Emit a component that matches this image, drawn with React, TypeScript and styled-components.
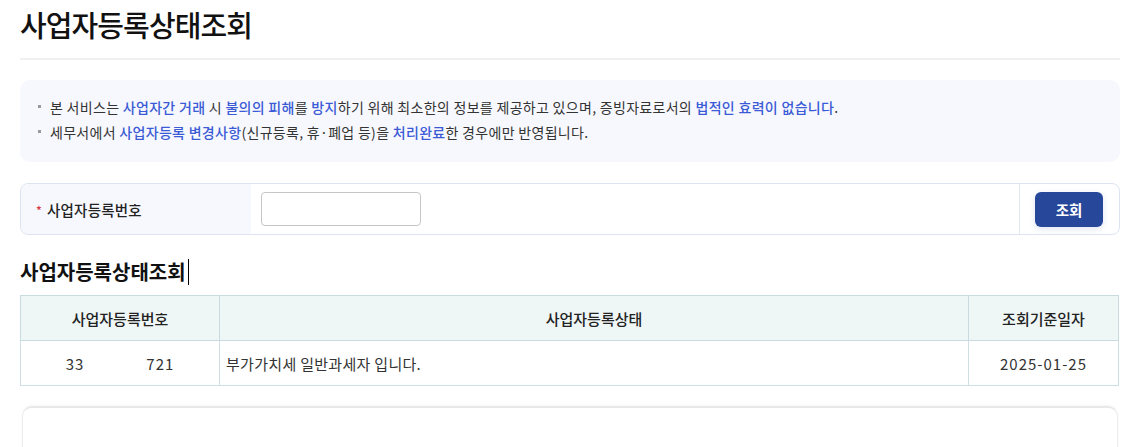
import React from "react";
import styled, { createGlobalStyle } from "styled-components";

const Global = createGlobalStyle`
  html, body { margin: 0; padding: 0; background: #fff; }
  body { font-family: "Noto Sans CJK KR", "Noto Sans", sans-serif; color: #222; }
  * { box-sizing: border-box; }
`;

const Page = styled.div`
  width: 1100px;
  margin-left: 20px;
  display: flex;
  flex-direction: column;
`;

const Title = styled.h1`
  margin: 0;
  height: 48px;
  line-height: 48px;
  font-size: 29px;
  font-weight: 500;
  letter-spacing: -0.9px;
  color: #111;
`;

const Divider = styled.hr`
  margin: 10px 0 0;
  border: 0;
  height: 2px;
  background: #f0f0f0;
`;

const InfoBox = styled.div`
  margin-top: 20px;
  background: #f7f8fd;
  border-radius: 10px;
  padding: 14px 18px 18px;
  display: flex;
  flex-direction: column;
`;

const InfoLine = styled.p`
  margin: 0;
  display: flex;
  align-items: center;
  height: 25px;
  font-size: 14px;
  letter-spacing: 0.3px;
  color: #333;
  white-space: pre;
  &::before {
    content: "";
    width: 3px;
    height: 3px;
    background: #999;
    margin-right: 9px;
    flex: none;
  }
`;

const Em = styled.span`
  color: #3b5bd6;
  font-weight: 500;
`;

const SearchBox = styled.div`
  margin-top: 21px;
  height: 52px;
  border: 1px solid #dce4f2;
  border-radius: 8px;
  display: flex;
  overflow: hidden;
`;

const LabelCell = styled.div`
  width: 230px;
  background: #f6f8fe;
  display: flex;
  align-items: center;
  padding-left: 15px;
  font-size: 14.5px;
  font-weight: 500;
  letter-spacing: 0.2px;
  color: #222;
`;

const Required = styled.span`
  color: #d9363e;
  font-size: 12px;
  margin-right: 5px;
`;

const InputCell = styled.div`
  flex: 1;
  display: flex;
  align-items: center;
  padding-left: 10px;
`;

const Input = styled.input`
  width: 160px;
  height: 34px;
  border: 1px solid #c6c6c6;
  border-radius: 4px;
  outline: none;
  padding: 0 8px;
  font-family: inherit;
  font-size: 14px;
`;

const ButtonCell = styled.div`
  width: 100px;
  border-left: 1px solid #e3e8f2;
  display: flex;
  align-items: center;
  padding-left: 15px;
`;

const Button = styled.button`
  width: 68px;
  height: 35px;
  border: 0;
  border-radius: 6px;
  background: #27479b;
  color: #fff;
  font-family: inherit;
  font-size: 14.5px;
  font-weight: 600;
  box-shadow: 0 2px 6px rgba(39, 71, 155, 0.15);
`;

const SubTitle = styled.h2`
  margin: 22px 0 0;
  height: 30px;
  line-height: 30px;
  font-size: 20px;
  font-weight: 700;
  letter-spacing: 0px;
  color: #111;
  display: flex;
  align-items: center;
`;

const Caret = styled.span`
  display: inline-block;
  width: 1.5px;
  height: 26px;
  background: #000;
  margin-left: 2px;
`;

const Table = styled.table`
  margin-top: 8px;
  width: 1099px;
  border-collapse: collapse;
  font-size: 15px;
  color: #222;
`;

const Th = styled.th<{ $w?: number }>`
  height: 45px;
  background: #eef6f6;
  border: 1px solid #c8dcdf;
  font-weight: 500;
  text-align: center;
  width: ${(p) => (p.$w ? `${p.$w}px` : "auto")};
  padding: 0;
`;

const Td = styled.td<{ $align?: string }>`
  height: 45px;
  border: 1px solid #cfe0e2;
  text-align: ${(p) => p.$align || "center"};
  padding: 0 6px;
  color: #333;
  letter-spacing: 0.3px;
`;

const Num = styled.span`
  letter-spacing: 1px;
`;

const Mask = styled.span`
  display: inline-block;
  width: 62px;
`;

const BottomCard = styled.div`
  margin-top: 20px;
  margin-left: 2px;
  width: 1096px;
  height: 60px;
  border: 1px solid #ececec;
  border-top: 2px solid #e8e8e8;
  border-bottom: 0;
  border-radius: 10px 10px 0 0;
  box-shadow: 0 -1px 3px rgba(0, 0, 0, 0.04);
`;

export default function App() {
  return (
    <>
      <Global />
      <Page>
        <Title>사업자등록상태조회</Title>
        <Divider />
        <InfoBox>
          <InfoLine>
            본 서비스는 <Em>사업자간 거래</Em> 시 <Em>불의의 피해</Em>를 <Em>방지</Em>하기 위해 최소한의 정보를 제공하고 있으며, 증빙자료로서의 <Em>법적인 효력이 없습니다</Em>.
          </InfoLine>
          <InfoLine>
            세무서에서 <Em>사업자등록 변경사항</Em>(신규등록, 휴·폐업 등)을 <Em>처리완료</Em>한 경우에만 반영됩니다.
          </InfoLine>
        </InfoBox>
        <SearchBox>
          <LabelCell>
            <Required>*</Required>사업자등록번호
          </LabelCell>
          <InputCell>
            <Input type="text" />
          </InputCell>
          <ButtonCell>
            <Button>조회</Button>
          </ButtonCell>
        </SearchBox>
        <SubTitle>
          사업자등록상태조회
          <Caret />
        </SubTitle>
        <Table>
          <thead>
            <tr>
              <Th $w={199}>사업자등록번호</Th>
              <Th>사업자등록상태</Th>
              <Th $w={150}>조회기준일자</Th>
            </tr>
          </thead>
          <tbody>
            <tr>
              <Td>
                <Num>33</Num>
                <Mask />
                <Num>721</Num>
              </Td>
              <Td $align="left">부가가치세 일반과세자 입니다.</Td>
              <Td>
                <Num>2025-01-25</Num>
              </Td>
            </tr>
          </tbody>
        </Table>
        <BottomCard />
      </Page>
    </>
  );
}
